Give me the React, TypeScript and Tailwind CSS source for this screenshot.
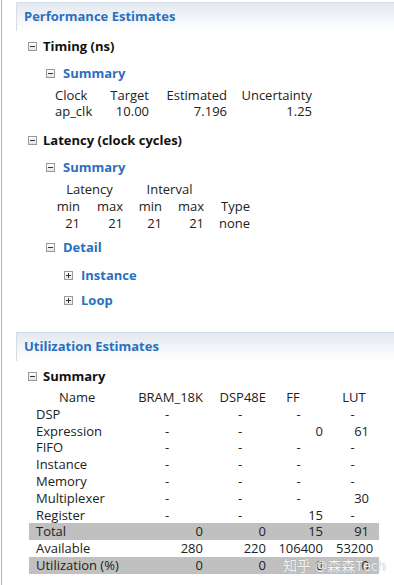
const BLUE = "text-[#2b6fbe]";

function Box({ plus = false }: { plus?: boolean }) {
  return (
    <span className="relative inline-block w-[9px] h-[9px] shrink-0 border border-[#9a9a9a] bg-gradient-to-b from-white to-[#e4e4e4]">
      <span className="absolute left-[1px] right-[1px] top-[3px] h-px bg-[#333]" />
      {plus && <span className="absolute top-[1px] bottom-[1px] left-[3px] w-px bg-[#333]" />}
    </span>
  );
}

function Header({ title }: { title: string }) {
  return (
    <div className="ml-[14px] h-[29px] flex items-center pl-[7px] border-t border-l border-[#d6dde6] bg-gradient-to-b from-[#e3e9f1] to-white">
      <span className={`text-[13px] font-bold ${BLUE}`}>{title}</span>
    </div>
  );
}

function Node({
  label,
  pl,
  gap,
  blue = false,
  plus = false,
  className = "",
}: {
  label: string;
  pl: string;
  gap: string;
  blue?: boolean;
  plus?: boolean;
  className?: string;
}) {
  return (
    <div className={`flex items-center h-[17px] ${pl} ${gap} ${className}`}>
      <Box plus={plus} />
      <span className={`text-[13px] font-bold ${blue ? BLUE : "text-[#111]"}`}>{label}</span>
    </div>
  );
}

const rows: [string, string, string, string, string][] = [
  ["DSP", "-", "-", "-", "-"],
  ["Expression", "-", "-", "0", "61"],
  ["FIFO", "-", "-", "-", "-"],
  ["Instance", "-", "-", "-", "-"],
  ["Memory", "-", "-", "-", "-"],
  ["Multiplexer", "-", "-", "-", "30"],
  ["Register", "-", "-", "15", "-"],
  ["Total", "0", "0", "15", "91"],
  ["Available", "280", "220", "106400", "53200"],
  ["Utilization (%)", "0", "0", "0", "0"],
];

function Cell({ v, w, pr }: { v: string; w: string; pr: string }) {
  return <div className={`${w} ${v === "-" ? "text-center" : `text-right ${pr}`}`}>{v}</div>;
}

export default function App() {
  return (
    <div
      className="relative w-[394px] h-[585px] overflow-hidden bg-white pl-px text-[13px] text-[#222]"
      style={{ fontFamily: '"Open Sans", "Noto Sans", "Noto Sans CJK SC", sans-serif' }}
    >
      <div className="h-full border-l border-[#b4b4b4] pt-[2px]">
        <Header title="Performance Estimates" />

        <Node label="Timing (ns)" pl="pl-[26px]" gap="gap-[6px]" className="mt-[7px]" />
        <Node label="Summary" pl="pl-[44px]" gap="gap-[8px]" blue className="mt-[10px]" />

        <div className="mt-[5px] pl-[53px] leading-[16px]">
          <div className="flex">
            <div className="w-[45px]">Clock</div>
            <div className="w-[49px] text-right">Target</div>
            <div className="w-[78px] text-right">Estimated</div>
            <div className="w-[85px] text-right">Uncertainty</div>
          </div>
          <div className="flex">
            <div className="w-[45px]">ap_clk</div>
            <div className="w-[49px] text-right">10.00</div>
            <div className="w-[78px] text-right">7.196</div>
            <div className="w-[85px] text-right">1.25</div>
          </div>
        </div>

        <Node label="Latency (clock cycles)" pl="pl-[26px]" gap="gap-[6px]" className="mt-[13px]" />
        <Node label="Summary" pl="pl-[44px]" gap="gap-[8px]" blue className="mt-[10px]" />

        <div className="mt-[5px] pl-[54px] leading-[17px]">
          <div className="flex">
            <div className="w-[67px] text-center">Latency</div>
            <div className="w-[81px] pl-[12px] text-center">Interval</div>
          </div>
          <div className="flex">
            <div className="w-[24px] text-right">min</div>
            <div className="w-[43px] text-right">max</div>
            <div className="w-[39px] text-right">min</div>
            <div className="w-[42px] text-right">max</div>
            <div className="w-[46px] text-right">Type</div>
          </div>
          <div className="flex">
            <div className="w-[24px] text-right">21</div>
            <div className="w-[43px] text-right">21</div>
            <div className="w-[39px] text-right">21</div>
            <div className="w-[42px] text-right">21</div>
            <div className="w-[46px] text-right">none</div>
          </div>
        </div>

        <Node label="Detail" pl="pl-[44px]" gap="gap-[8px]" blue className="mt-[7px]" />
        <Node label="Instance" pl="pl-[62px]" gap="gap-[8px]" blue plus className="mt-[11px]" />
        <Node label="Loop" pl="pl-[62px]" gap="gap-[8px]" blue plus className="mt-[8px]" />

        <div className="mt-[23px]">
          <Header title="Utilization Estimates" />
        </div>

        <Node label="Summary" pl="pl-[26px]" gap="gap-[6px]" className="mt-[7px]" />

        <div className="mt-[4px] ml-[27px] w-[350px] leading-[16.8px]">
          <div className="flex">
            <div className="w-[102px] pl-[30px]">Name</div>
            <div className="w-[76px] text-right pr-[4px]">BRAM_18K</div>
            <div className="w-[5px]" />
            <div className="w-[56px] text-right pr-[2px]">DSP48E</div>
            <div className="w-[1px]" />
            <div className="w-[56px] text-center pr-[8px]">FF</div>
            <div className="w-[11px]" />
            <div className="w-[36px] text-center">LUT</div>
          </div>
          {rows.map((r) => (
            <div
              key={r[0]}
              className={`flex h-[16.8px] ${r[0] === "Total" || r[0].startsWith("Util") ? "bg-[#c0c0c0]" : ""}`}
            >
              <div className="w-[102px] pl-[7px]">{r[0]}</div>
              <Cell v={r[1]} w="w-[76px] pr-[4px]" pr="pr-[4px]" />
              <div className="w-[5px]" />
              <Cell v={r[2]} w="w-[56px]" pr="pr-[2px]" />
              <div className="w-[1px]" />
              <Cell v={r[3]} w="w-[56px] pl-[3px]" pr="pr-[2px]" />
              <div className="w-[11px]" />
              <Cell v={r[4]} w="w-[36px] pr-[3px]" pr="pr-[2px]" />
            </div>
          ))}
        </div>

        <Node label="Detail" pl="pl-[26px]" gap="gap-[6px]" className="mt-[8px]" />
      </div>

      <div
        className="absolute left-[283px] top-[555px] text-[14px] text-white/90"
        style={{ textShadow: "0 0 1px #888" }}
      >
        知乎 @森森Tech
      </div>
    </div>
  );
}
